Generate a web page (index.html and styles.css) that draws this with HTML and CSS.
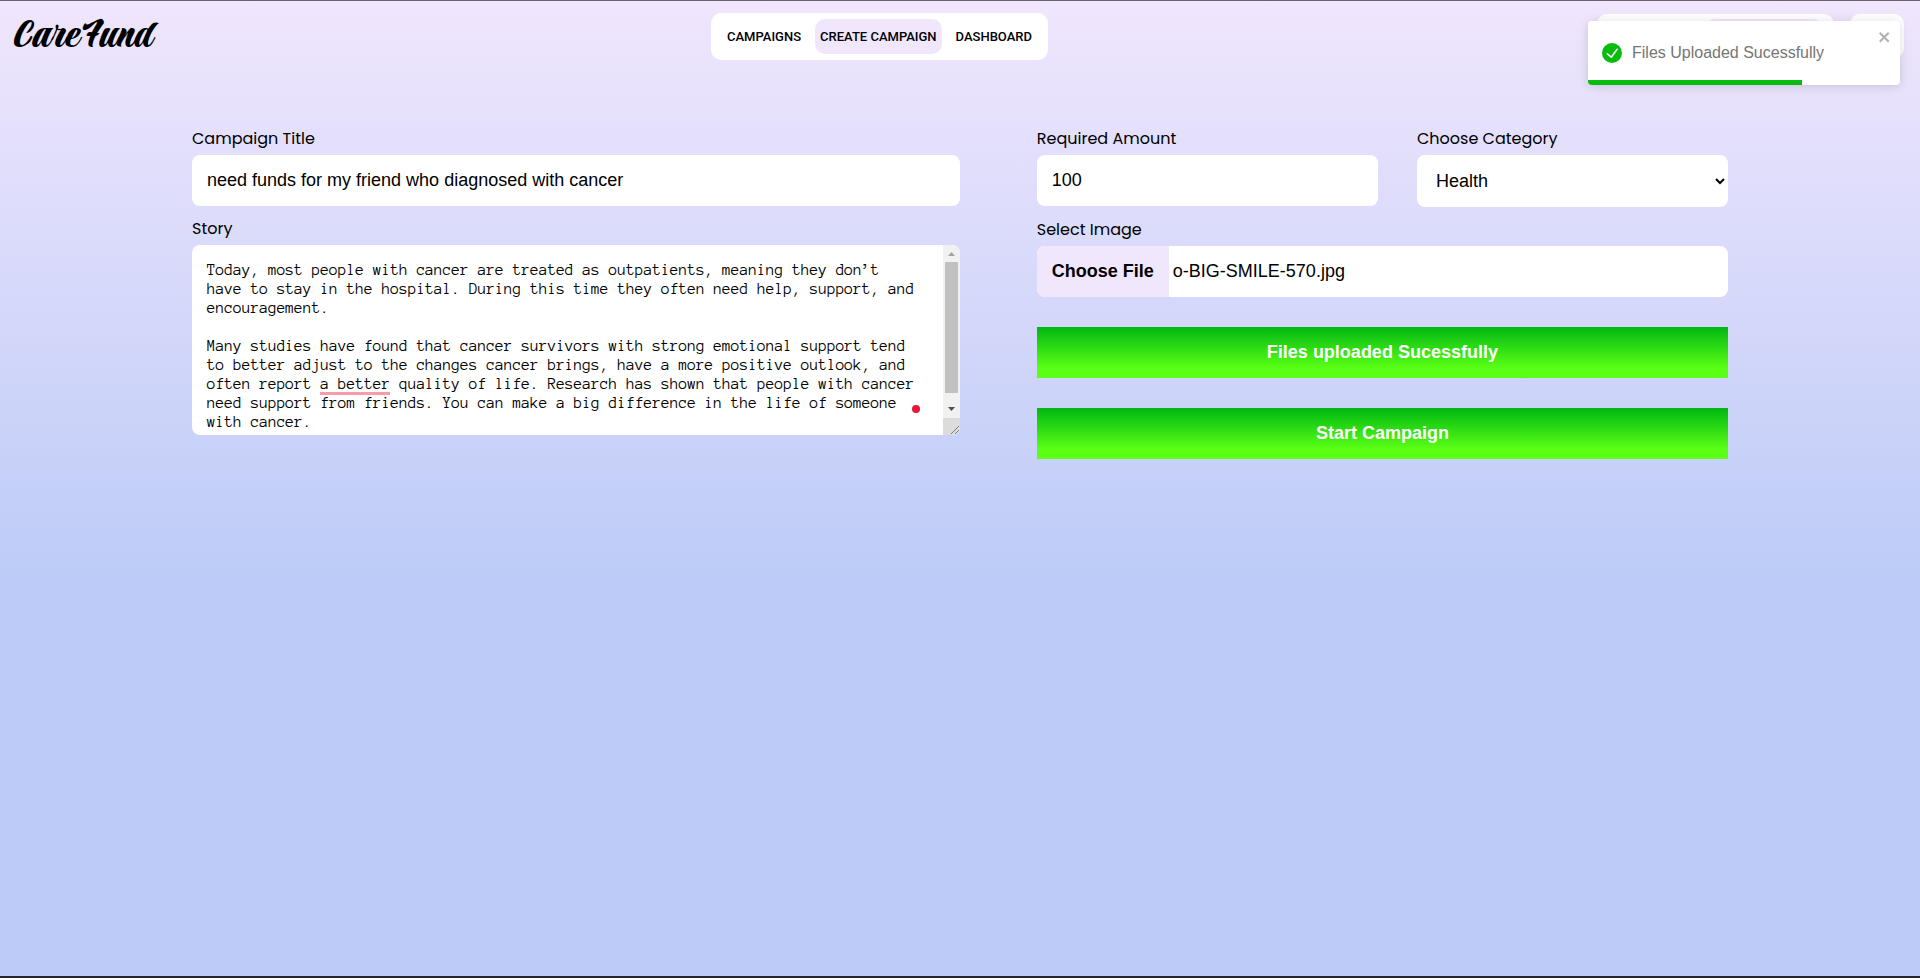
FILE: index.html
```html
<!DOCTYPE html>
<html lang="en">
<head>
<meta charset="utf-8">
<title>CareFund - Create Campaign</title>
<link rel="stylesheet" href="styles.css">
</head>
<body>
<div class="page">
  <header class="header">
    <div class="logo">CareFund</div>
    <nav class="nav">
      <a class="nav-link" href="#campaigns">Campaigns</a>
      <a class="nav-link active" href="#create">Create Campaign</a>
      <a class="nav-link" href="#dashboard">Dashboard</a>
    </nav>
    <div class="wallet">
      <div class="wallet-box"><span class="wallet-address"></span></div>
      <div class="theme-box"></div>
    </div>
  </header>

  <form class="form">
    <div class="left">
      <div class="field">
        <label for="title">Campaign Title</label>
        <input class="control" id="title" type="text" value="need funds for my friend who diagnosed with cancer">
      </div>
      <div class="field">
        <label for="story">Story</label>
        <div class="story-box">
          <textarea class="story" id="story" spellcheck="false">Today, most people with cancer are treated as outpatients, meaning they don’t have to stay in the hospital. During this time they often need help, support, and encouragement.

Many studies have found that cancer survivors with strong emotional support tend to better adjust to the changes cancer brings, have a more positive outlook, and often report a better quality of life. Research has shown that people with cancer need support from friends. You can make a big difference in the life of someone with cancer.</textarea>
          <div class="scrollbar" aria-hidden="true">
            <svg class="arrow" viewBox="0 0 17 17"><path d="M5 11h7L8.500 7z" fill="#a3a3a3"/></svg>
            <div class="track"><div class="thumb"></div></div>
            <svg class="arrow" viewBox="0 0 17 17"><path d="M5 6h7L8.500 10z" fill="#505050"/></svg>
            <svg class="arrow grip" viewBox="0 0 17 17"><path d="M8 16L16 8M12 16L16 12" stroke="#555" stroke-width="1" stroke-dasharray="1 0.4"/></svg>
          </div>
          <span class="hint-underline"></span>
          <span class="hint-dot"></span>
        </div>
      </div>
    </div>

    <div class="right">
      <div class="row">
        <div class="field amount">
          <label for="amount">Required Amount</label>
          <input class="control" id="amount" type="text" value="100">
        </div>
        <div class="field category">
          <label for="category">Choose Category</label>
          <select class="control select" id="category">
            <option>Health</option>
            <option>Education</option>
            <option>Animal</option>
          </select>
        </div>
      </div>
      <div class="field">
        <label for="image">Select Image</label>
        <input class="control file" id="image" type="file">
      </div>
      <button class="button" type="button">Files uploaded Sucessfully</button>
      <button class="button" type="button">Start Campaign</button>
    </div>
  </form>

  <div class="toast" role="alert">
    <svg class="toast-icon" viewBox="0 0 24 24"><path fill="#07bc0c" d="M12 0a12 12 0 1012 12A12.014 12.014 0 0012 0zm6.927 8.200l-6.845 9.289a1.011 1.011 0 01-1.430.188l-4.888-3.908a1 1 0 111.250-1.562l4.076 3.261 6.227-8.451a1 1 0 111.610 1.183z"/></svg>
    <span class="toast-text">Files Uploaded Sucessfully</span>
    <button class="toast-close" type="button" aria-label="close"><svg class="close-icon" viewBox="0 0 14 16"><path fill="#b2b2b2" fill-rule="evenodd" d="M7.710 8.230l3.750 3.750-1.480 1.480-3.750-3.750-3.750 3.750L1 11.980l3.750-3.750L1 4.480 2.480 3l3.750 3.750L9.980 3l1.480 1.480-3.750 3.750z"/></svg></button>
    <div class="toast-progress"></div>
  </div>
</div>
<script src="script.js"></script>
</body>
</html>
```
FILE: styles.css
```css
* {
  box-sizing: border-box;
}

body {
  margin: 0;
}

.page {
  position: relative;
  min-height: 100vh;
  border-top: 1px solid #69626f;
  border-bottom: 2px solid #25252b;
  background: linear-gradient(180deg, #f0e6fd 0%, #bccbf7 60%);
  font-family: Poppins, Inter, sans-serif;
  color: #000;
}

.header {
  display: flex;
  justify-content: space-between;
  align-items: flex-start;
  padding: 12px 16px 0 12px;
}

.logo {
  width: 150px;
  font: 44px/46px Praise, "Liberation Serif", cursive;
}

.nav {
  display: flex;
  gap: 9px;
  padding: 6px 11px;
  border-radius: 10px;
  background: #fff;
}

.nav-link {
  padding: 0 5px;
  border-radius: 10px;
  font: 500 13px/35px Roboto, sans-serif;
  color: #000;
  text-decoration: none;
  text-transform: uppercase;
}

.nav-link.active {
  background: #f0e7fd;
}

.wallet {
  display: flex;
  gap: 16px;
  padding-top: 1px;
}

.wallet-box {
  display: flex;
  justify-content: flex-end;
  width: 237px;
  height: 44px;
  padding: 5px 11px;
  border-radius: 10px;
  background: #fff;
}

.wallet-address {
  width: 118px;
  border-radius: 10px;
  background: #f0e7fd;
}

.theme-box {
  width: 54px;
  height: 44px;
  border-radius: 10px;
  background: #fff;
}

.form {
  display: flex;
  justify-content: space-between;
  width: 80%;
  margin: 0 auto;
  padding-top: 67px;
}

.left {
  width: 50%;
}

.right {
  width: 45%;
}

.field {
  display: flex;
  flex-direction: column;
  gap: 4px;
  margin-bottom: 11px;
  font-size: 16px;
  line-height: 24px;
}

.row {
  display: flex;
  gap: 39px;
}

.amount {
  flex: 1;
}

.category {
  width: 45%;
}

.control {
  width: 100%;
  height: 51px;
  padding: 15px;
  border: 0;
  border-radius: 8px;
  outline: 0;
  background: #fff;
  color: #000;
  font: 18px/21px "Liberation Sans", Arial, sans-serif;
}

.select {
  height: 52px;
}

.file {
  padding: 0;
  overflow: hidden;
  line-height: 51px;
}

.file::file-selector-button {
  height: 51px;
  margin: 0 4px 0 0;
  padding: 15px;
  border: 0;
  background: #f0e7fd;
  color: #000;
  font: bold 18px/21px "Liberation Sans", Arial, sans-serif;
}

.story-box {
  position: relative;
  display: flex;
  height: 190px;
  overflow: hidden;
  border-radius: 8px;
  background: #fff;
}

.story {
  flex: 1;
  padding: 16px 24px 0 15px;
  border: 0;
  outline: 0;
  overflow: hidden;
  resize: none;
  background: transparent;
  color: #000;
  font: 16px/19px Consolas, "Anonymous Pro", "Liberation Mono", monospace;
}

.scrollbar {
  display: flex;
  flex-direction: column;
  width: 17px;
  background: #f1f1f1;
}

.arrow {
  display: block;
  width: 17px;
  height: 17px;
}

.track {
  flex: 1;
  padding: 0 2px;
}

.thumb {
  height: 131px;
  background: #c1c1c1;
}

.grip {
  background: #dcdcdc;
}

.hint-underline {
  position: absolute;
  top: 147px;
  left: 128px;
  width: 70px;
  height: 3px;
  background: #ff9aac;
}

.hint-dot {
  position: absolute;
  right: 40px;
  bottom: 22px;
  width: 8px;
  height: 8px;
  border-radius: 50%;
  background: #eb1537;
}

.button {
  display: block;
  width: 100%;
  margin-top: 30px;
  padding: 15px;
  border: 0;
  background: linear-gradient(180deg, #00b712 0%, #5aff15 80%);
  color: #fff;
  font: bold 18px/21px "Liberation Sans", Arial, sans-serif;
}

.toast {
  position: absolute;
  top: 20px;
  right: 20px;
  display: flex;
  align-items: center;
  width: 312px;
  height: 64px;
  padding: 0 14px;
  overflow: hidden;
  border-radius: 4px;
  background: #fff;
  box-shadow: 0 1px 10px rgba(0, 0, 0, 0.1), 0 2px 15px rgba(0, 0, 0, 0.05);
  font: 16px/20px "Liberation Sans", Arial, sans-serif;
  color: #757575;
}

.toast-icon {
  width: 20px;
  height: 20px;
  margin-right: 10px;
}

.toast-close {
  position: absolute;
  top: 8px;
  right: 8px;
  padding: 0;
  border: 0;
  background: transparent;
}

.close-icon {
  display: block;
  width: 14px;
  height: 16px;
}

.toast-progress {
  position: absolute;
  left: 0;
  bottom: 0;
  width: 214px;
  height: 5px;
  background: #07bc0c;
}
```
FILE: script.js
```javascript
const transfer = new DataTransfer();
transfer.items.add(new File([""], "o-BIG-SMILE-570.jpg", { type: "image/jpeg" }));
document.getElementById("image").files = transfer.files;
```
